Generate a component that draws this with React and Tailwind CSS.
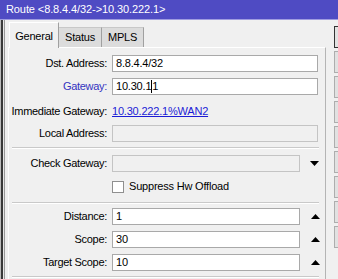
import React from "react";

const font = { fontFamily: '"Liberation Sans", Arial, sans-serif' };

function Label({ children, blue }) {
  return (
    <div
      className={
        "w-[99px] shrink-0 text-right pr-[1px] text-[11px] tracking-[-0.3px] leading-[17px] " +
        (blue ? "text-[#3333c0]" : "text-black")
      }
    >
      {children}
    </div>
  );
}

function Up() {
  return (
    <svg width="9" height="5" viewBox="0 0 9 5" className="block">
      <polygon points="0,5 9,5 4.5,0" fill="#000" />
    </svg>
  );
}
function Down() {
  return (
    <svg width="9" height="5" viewBox="0 0 9 5" className="block">
      <polygon points="0,0 9,0 4.5,5" fill="#000" />
    </svg>
  );
}

function Sep() {
  return <div className="ml-[3px] w-[307px] h-[2px] border-t border-[#c9c9c9] border-b-white border-b" />;
}

function Input({ children, wide, gray }) {
  return (
    <div
      className={
        "h-[17px] border border-[#a9a9a9] pl-[3px] text-[11px] leading-[15px] tracking-[-0.2px] text-black flex items-center " +
        (wide ? "w-[206px] " : "w-[188px] ") +
        (gray ? "bg-[#f0f0f0] border-[#c4c4c4]" : "bg-white")
      }
    >
      {children}
    </div>
  );
}

export default function App() {
  return (
    <div className="w-[338px] h-[279px] overflow-hidden bg-[#f0f0f0] flex flex-col" style={font}>
      <div className="h-[19px] shrink-0 bg-[#4f4bc3] text-white text-[11px] tracking-[-0.1px] pl-[6px] flex items-center">
        Route &lt;8.8.4.4/32-&gt;10.30.222.1&gt;
      </div>
      <div className="h-[1px] shrink-0 bg-[#9f9ce0]" />
      <div className="flex flex-1 min-h-0">
        <div className="w-[4px] shrink-0 flex">
          <div className="w-[1px] bg-[#bdbdbd]" />
          <div className="w-[2px] bg-[#3a3a3a]" />
          <div className="w-[1px] bg-[#e8e8e8]" />
        </div>
        <div className="w-[1px] shrink-0 bg-[#9a9a9a]" />
        <div className="flex-1 flex flex-col pl-[3px] min-w-0">
          <div className="flex items-end h-[27px] shrink-0 pl-[1px] relative z-10">
            <div className="w-[50px] h-[25px] bg-[#f0f0f0] border-t border-l border-white border-r border-r-[#a0a0a0] text-[11px] tracking-[-0.2px] flex items-start justify-center pt-[5px] -mb-[1px] h-[26px]">
              General
            </div>
            <div className="w-[43px] h-[20px] bg-[#dcdcdc] border-t border-[#c8c8c8] border-r border-r-[#a0a0a0] text-[11px] tracking-[-0.2px] flex items-center justify-center">
              Status
            </div>
            <div className="w-[42px] h-[20px] bg-[#dcdcdc] border-t border-[#c8c8c8] border-r border-r-[#a0a0a0] text-[11px] tracking-[-0.2px] flex items-center justify-center">
              MPLS
            </div>
          </div>
          <div className="flex-1 w-[318px] border-t border-l border-white border-r border-r-[#b4b4b4] flex flex-col">
            <div className="flex items-center gap-[4px] mt-[7px]">
              <Label>Dst. Address:</Label>
              <Input wide>8.8.4.4/32</Input>
            </div>
            <div className="flex items-center gap-[4px] mt-[6px]">
              <Label blue>Gateway:</Label>
              <Input wide>
                10.30.1<span className="inline-block w-[1px] h-[13px] bg-black" />1
              </Input>
            </div>
            <div className="flex items-center gap-[4px] mt-[8px] h-[17px]">
              <Label>Immediate Gateway:</Label>
              <span className="text-[11px] tracking-[-0.2px] text-[#1c1cd6] underline leading-[17px]">
                10.30.222.1%WAN2
              </span>
            </div>
            <div className="flex items-center gap-[4px] mt-[5px]">
              <Label>Local Address:</Label>
              <Input wide gray />
            </div>
            <div className="mt-[5px]">
              <Sep />
            </div>
            <div className="flex items-center gap-[4px] mt-[6px]">
              <Label>Check Gateway:</Label>
              <Input gray />
              <div className="ml-[6px]">
                <Down />
              </div>
            </div>
            <div className="flex items-center mt-[8px] h-[13px] pl-[103px]">
              <div className="w-[12px] h-[12px] bg-white border border-[#8f8f8f]" />
              <span className="ml-[5px] text-[11px] tracking-[-0.2px]">Suppress Hw Offload</span>
            </div>
            <div className="mt-[9px]">
              <Sep />
            </div>
            <div className="flex items-center gap-[4px] mt-[4px]">
              <Label>Distance:</Label>
              <Input>1</Input>
              <div className="ml-[7px]">
                <Up />
              </div>
            </div>
            <div className="flex items-center gap-[4px] mt-[6px]">
              <Label>Scope:</Label>
              <Input>30</Input>
              <div className="ml-[7px]">
                <Up />
              </div>
            </div>
            <div className="flex items-center gap-[4px] mt-[6px]">
              <Label>Target Scope:</Label>
              <Input>10</Input>
              <div className="ml-[7px]">
                <Up />
              </div>
            </div>
            <div className="mt-[5px]">
              <Sep />
            </div>
          </div>
        </div>
        <div className="w-[12px] shrink-0 flex flex-col pt-[6px] pl-[8px] gap-[3px]">
          <div className="w-[10px] h-[22px] border border-[#333] bg-[#e1e1e1]" />
          <div className="w-[10px] h-[22px] border border-[#adadad] bg-[#e1e1e1]" />
          <div className="w-[10px] h-[22px] border border-[#adadad] bg-[#e1e1e1]" />
          <div className="w-[10px] h-[22px] border border-[#adadad] bg-[#e1e1e1]" />
          <div className="w-[10px] h-[22px] border border-[#adadad] bg-[#e1e1e1]" />
          <div className="w-[10px] h-[22px] border border-[#adadad] bg-[#e1e1e1]" />
          <div className="w-[10px] h-[22px] border border-[#adadad] bg-[#e1e1e1]" />
          <div className="w-[10px] h-[22px] border border-[#adadad] bg-[#e1e1e1]" />
          <div className="w-[10px] h-[22px] border border-[#adadad] bg-[#e1e1e1]" />
        </div>
      </div>
    </div>
  );
}
